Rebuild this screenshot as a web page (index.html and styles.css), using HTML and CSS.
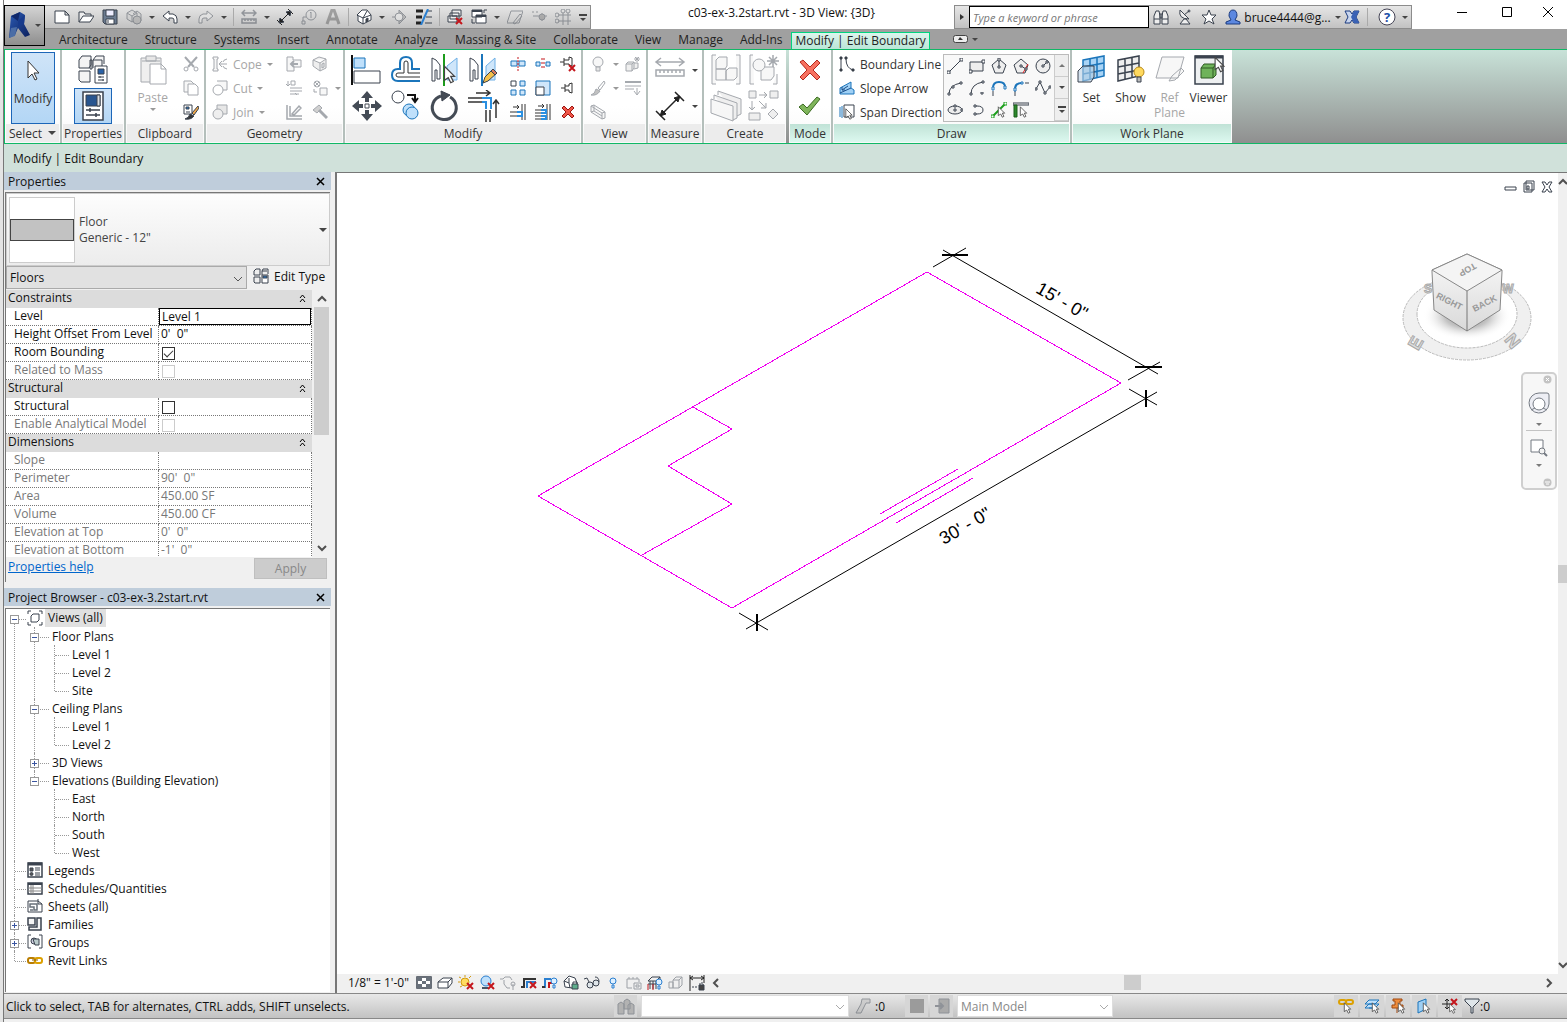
FILE: index.html
```html
<!DOCTYPE html>
<html lang="en">
<head>
    <meta charset="UTF-8">
    <meta name="viewport" content="width=device-width, initial-scale=1.0">
    <title>c03-ex-3.2start.rvt - 3D View: {3D}</title>
    <link rel="stylesheet" href="styles.css">
</head>
<body>
<!-- shared shapes -->
<svg class="defs" width="0" height="0">
    <defs>
        <linearGradient id="navy" x1="0" y1="0" x2="1" y2="1"><stop offset="0" stop-color="#2b5bb5"/><stop offset="1" stop-color="#0c1f5c"/></linearGradient>
        <linearGradient id="ring" x1="0" y1="0" x2="0" y2="1"><stop offset="0" stop-color="#fafafa"/><stop offset="1" stop-color="#d9d9d9"/></linearGradient>
        <radialGradient id="shade"><stop offset="0" stop-color="#777"/><stop offset=".5" stop-color="#aaa" stop-opacity=".7"/><stop offset="1" stop-color="#fff" stop-opacity="0"/></radialGradient>
        <symbol id="cursor" viewBox="0 0 10 15"><path d="M1 1v11l3-2 2 4 2-1-2-4h3z" fill="#fff" stroke="#444"/></symbol>
        <symbol id="redx" viewBox="0 0 8 8"><path d="M1 1l6 6M7 1L1 7" stroke="#c4161c" stroke-width="2"/></symbol>
        <symbol id="bulb" viewBox="0 0 8 12"><circle cx="4" cy="4" r="3" fill="#dff0ff" stroke="#2a7fd0"/><path d="M3 8h2v3H3z" fill="#dff0ff" stroke="#2a7fd0"/></symbol>
    </defs>
</svg>

<div class="window">
    <button class="app-button" aria-label="Application menu">
        <svg width="24" height="28" viewBox="0 0 24 28"><path d="M3 4l9-4 5 3-1 9 6 11-5 2-7-9-3 7-6 3z" fill="url(#navy)"/><path d="M3 4l9-4-2 9z" fill="#10286b"/><path d="M10 9l7-6-1 9-6 3z" fill="#173a8c"/><path d="M1 26l2-10 6-1-2 9z" fill="#4b6da6"/></svg>
        <i class="tri"></i>
    </button>

    <header class="titlebar">
        <div class="qat">
            <button aria-label="New"><svg class="ico" width="16" height="16"><path d="M1 2h10l4 4v8H1zM11 2v4h4" fill="#fff"/></svg></button>
            <button aria-label="Open"><svg class="ico" width="16" height="16"><path d="M1 13V3h5l1 2h6v2" fill="#eee"/><path d="M1 13l4-6h11l-4 6z" fill="#fff"/></svg></button>
            <button aria-label="Save"><svg class="ico" width="16" height="16"><path d="M1 1h14v14H3l-2-2z" fill="#6b7b90"/><path d="M4 1h8v6H4z" fill="#eef"/><path d="M4 10h8v5H4z" fill="#fff"/><path d="M6 11v3"/></svg></button>
            <button aria-label="Synchronize"><svg class="ico dis" width="16" height="16"><path d="M1 4l5-3 5 3v6l-5 3-5-3zM1 4l5 3 5-3M6 7v6M7 5l4-3 4 3v7l-4 3-3-2" fill="#ccc"/><circle cx="11" cy="11" r="4" fill="#999"/></svg></button>
            <button class="drop" aria-label="Synchronize menu"><i class="tri"></i></button>
            <button aria-label="Undo"><svg class="ico" width="16" height="16"><path d="M1 7l6-5v3h4q4 1 4 5v4h-3v-3q0-2-2-2H7v3z" fill="#fff"/></svg></button>
            <button class="drop" aria-label="Undo menu"><i class="tri"></i></button>
            <button aria-label="Redo"><svg class="ico dis" width="16" height="16"><path d="M15 7L9 2v3H5q-4 1-4 5v4h3v-3q0-2 2-2h3v3z" fill="#eee"/></svg></button>
            <button class="drop" aria-label="Redo menu"><i class="tri"></i></button>
            <i class="sep"></i>
            <button aria-label="Measure"><svg class="ico dis" width="16" height="16"><path d="M1 4h14M4 1L1 4l3 3M12 1l3 3-3 3M1 10h14v4H1zM4 10v2M7 10v2M10 10v2M13 10v2" stroke-width="1.5"/></svg></button>
            <button class="drop" aria-label="Measure menu"><i class="tri"></i></button>
            <button aria-label="Aligned dimension"><svg class="ico" width="16" height="16"><path d="M2 14L14 2M0 11l5 5M11 0l5 5" stroke="#222"/><path d="M2 14l1-5 4 4zM14 2l-1 5-4-4z" fill="#222"/></svg></button>
            <button aria-label="Tag"><svg class="ico dis" width="16" height="16"><circle cx="10" cy="6" r="5"/><path d="M9 4l1-1v6M5 8H2v4M1 12h3v3H1z"/></svg></button>
            <button aria-label="Text"><svg class="ico dis" width="16" height="16"><path d="M2 15L7 1h2l5 14M4 10h8" stroke-width="3" stroke="#555"/></svg></button>
            <i class="sep"></i>
            <button aria-label="Default 3D view"><svg class="ico" width="16" height="16"><path d="M1 6l5-5h5l4 5v5l-8 4-5-3V7z" fill="#fff"/><path d="M1 6l6 3 4-7M7 9v6M7 9l8-3"/><path d="M10 10l2-1v3l-2 1z" fill="#444"/></svg></button>
            <button class="drop" aria-label="3D view menu"><i class="tri"></i></button>
            <button aria-label="Section"><svg class="ico dis" width="16" height="16"><path d="M0 8h3M7 1l7 7-7 7z" fill="#999"/><circle cx="7" cy="8" r="4" fill="#eee"/></svg></button>
            <button aria-label="Thin lines"><svg class="ico" width="16" height="16"><path d="M0 2h7M0 8h6M0 14h5" stroke-width="3" stroke="#222"/><path d="M11 2h5M10 8h6M9 14h7"/><path d="M12 0L5 16" stroke="#2a7fd0" stroke-width="2"/></svg></button>
            <i class="sep"></i>
            <button aria-label="Close hidden windows"><svg class="ico" width="16" height="16"><path d="M5 1h9v6H5zM3 4h9v6H3zM1 7h9v6H1z" fill="#eee"/><use href="#redx" x="8" y="8" width="8" height="8"/></svg></button>
            <button aria-label="Switch windows"><svg class="ico" width="16" height="16"><path d="M1 1h10v7H1zM5 6h10v8H5z" fill="#fff"/><path d="M1 2h10M5 7h10" stroke-width="2"/><path d="M1 10v4h3M13 4V1h3"/></svg></button>
            <button class="drop" aria-label="Switch windows menu"><i class="tri"></i></button>
            <button aria-label="Sketch"><svg class="ico dis" width="16" height="16"><path d="M4 2h12L12 14H0zM6 14l7-9 2 2-7 8z"/></svg></button>
            <button aria-label="Spot elevation"><svg class="ico dis" width="16" height="16"><path d="M1 3h2M5 3h2M2 7h14M11 4v8"/><circle cx="11" cy="8" r="3" fill="#777"/></svg></button>
            <button aria-label="Grid"><svg class="ico dis" width="16" height="16"><path d="M3 6h13M3 12h13M8 4v12M13 4v12"/><circle cx="8" cy="2" r="2"/><circle cx="13" cy="2" r="2"/><circle cx="2" cy="6" r="2"/><circle cx="2" cy="12" r="2"/></svg></button>
            <button class="more" aria-label="Customize toolbar"><i class="bar"></i><i class="tri"></i></button>
        </div>
        <h1>c03-ex-3.2start.rvt - 3D View: {3D}</h1>
        <div class="infocenter">
            <button class="go" aria-label="Collapse search"><svg width="6" height="8"><path d="M1 1l4 3-4 3z" fill="#333"/></svg></button>
            <input type="text" placeholder="Type a keyword or phrase" aria-label="Search">
            <button aria-label="Find"><svg class="ico" width="16" height="16"><path d="M1 15V7l2-5h3l1 5v8zM15 15V7l-2-5h-3L9 7v8zM1 10h6M9 10h6M7 5h2v4H7z" fill="#eee"/></svg></button>
            <button aria-label="Communication center"><svg class="ico" width="16" height="16"><path d="M3 1q-2 9 9 9zM7 6l5-4M3 15h10l-4-5H7z" fill="#eee"/><circle cx="12" cy="2" r="1"/></svg></button>
            <button aria-label="Favorites"><svg class="ico" width="16" height="16"><path d="M8 1l2 5h5l-4 4 2 5-5-3-5 3 2-5-4-4h5z" fill="#fff"/></svg></button>
            <button aria-label="Account"><svg class="ico" width="16" height="16"><path d="M1 15v-2l5-2-2-4q0-6 4-6t4 6l-2 4 5 2v2z" fill="#5b87e0" stroke="#1b3b80"/></svg></button>
            <button class="user">bruce4444@g... <i class="tri"></i></button>
            <button aria-label="Exchange apps"><svg width="16" height="16"><path d="M1 2h5l2 3 2-3h5l-3 6 3 6h-5l-2-3-2 3H1l3-6z" fill="#c9d6ee" stroke="#1b3b80"/><path d="M10 2h5l-3 6 3 6h-5L7 8z" fill="#3a62b5"/></svg></button>
            <i class="sep"></i>
            <button class="help" aria-label="Help"><svg width="18" height="18"><circle cx="9" cy="9" r="8" fill="#fff" stroke="#445"/><text x="9" y="14" text-anchor="middle" class="help-mark">?</text></svg></button>
            <button class="drop" aria-label="Help menu"><i class="tri"></i></button>
        </div>
        <div class="win-controls">
            <button aria-label="Minimize"><svg width="11" height="11"><path d="M0 5h10v1H0z"/></svg></button>
            <button aria-label="Maximize"><svg width="11" height="11"><path d="M.5.5h9v9h-9z" fill="none" stroke="#000"/></svg></button>
            <button aria-label="Close"><svg width="11" height="11"><path d="M0 0l10 10M10 0L0 10" stroke="#000"/></svg></button>
        </div>
    </header>

    <nav class="tabs">
        <a href="#">Architecture</a>
        <a href="#">Structure</a>
        <a href="#">Systems</a>
        <a href="#">Insert</a>
        <a href="#">Annotate</a>
        <a href="#">Analyze</a>
        <a href="#">Massing &amp; Site</a>
        <a href="#">Collaborate</a>
        <a href="#">View</a>
        <a href="#">Manage</a>
        <a href="#">Add-Ins</a>
        <a href="#" class="active">Modify | Edit Boundary</a>
        <button class="collapse" aria-label="Minimize ribbon"><svg width="15" height="8"><rect x=".5" y=".5" width="14" height="7" rx="2" fill="#eee" stroke="#444"/><path d="M5 5l2-3 3 3z" fill="#333"/></svg><i class="tri"></i></button>
    </nav>

    <section class="ribbon">
        <div class="panel p-select">
            <div class="tools">
                <button class="big pressed"><svg width="20" height="32" viewBox="0 0 20 32"><path d="M5 6v17l4-4 3 6 2-1-3-6h5z" fill="#fff" stroke="#333"/></svg>Modify</button>
            </div>
            <button class="caption">Select <i class="tri"></i></button>
        </div>
        <div class="panel p-props">
            <div class="tools stack">
                <button aria-label="Type properties"><svg class="ico" width="32" height="32"><path d="M2 6l3-4h9v9l-2 3H2zM16 6l3-4h8v8M2 17h11v11H4l-2-2zM16 14V6h9v6M13 6h2v9h-2z" fill="#f4f4f4"/><path d="M18 12h12v17H18z" fill="#fff"/><path d="M21 15h6v5h-6z" fill="#2a62a8"/><path d="M21 23h6M21 26h6M23 22v2M26 25v2"/></svg></button>
                <button class="pressed" aria-label="Properties"><svg class="ico" width="32" height="32"><path d="M6 2h20v28H6z" fill="#fff" stroke-width="1.5"/><path d="M9 5h14v11H9z" fill="#28558f"/><path d="M20 5h3v11h-3z" fill="#d8dde2"/><path d="M9 20h14M9 25h14M13 18v4M19 23v4" stroke-width="1.5"/></svg></button>
            </div>
            <div class="caption">Properties</div>
        </div>
        <div class="panel p-clip">
            <div class="tools">
                <button class="big" disabled><svg class="ico" width="32" height="32" viewBox="0 0 32 32"><path d="M4 4h20v24H4z" fill="#ddd"/><path d="M9 2h10v5H9z" fill="#ccc"/><path d="M13 10h11l5 5v15H13z" fill="#fff"/><path d="M24 10v5h5M5 7h18"/></svg>Paste<i class="tri"></i></button>
                <div class="col">
                    <button disabled aria-label="Cut"><svg class="ico" width="16" height="16"><path d="M2 1l9 10M14 1L5 11" stroke-width="2"/><circle cx="3" cy="13" r="2"/><circle cx="13" cy="13" r="2"/></svg></button>
                    <button disabled aria-label="Copy"><svg class="ico" width="16" height="16"><path d="M1 1h7l3 3v8H1z" fill="#eee"/><path d="M5 4h7l3 3v8H5z" fill="#fff"/></svg></button>
                    <button aria-label="Match type"><svg class="ico" width="16" height="16"><path d="M1 1h8v9H1z" fill="#fff"/><path d="M3 3h3v2H3z" fill="#2a7fd0"/><path d="M3 8h4"/><path d="M9 9l6-7 1 2-5 7z" fill="#eda64a"/><path d="M2 15q4-1 5-5l4 2q-3 4-9 3z" fill="#333"/></svg></button>
                </div>
            </div>
            <div class="caption">Clipboard</div>
        </div>
        <div class="panel p-geo">
            <div class="tools">
                <div class="col labelled">
                    <button disabled><svg class="ico" width="16" height="16"><path d="M1 1h5v2H5v10h1v2H1v-2h1V3H1zM7 8h8M10 5L7 8l3 3M15 3q-4 1-4 3M15 13q-4-1-4-3" fill="#eee"/></svg>Cope <i class="tri"></i></button>
                    <button disabled><svg class="ico" width="16" height="16"><path d="M5 1h10v9h-4" fill="#eee"/><circle cx="6" cy="10" r="5" fill="#fff"/></svg>Cut <i class="tri"></i></button>
                    <button disabled><svg class="ico" width="16" height="16"><path d="M5 1h10v9H5z" fill="#ccc"/><circle cx="6" cy="10" r="5" fill="#ddd"/></svg>Join <i class="tri"></i></button>
                </div>
                <div class="col">
                    <button disabled aria-label="Wall joins"><svg class="ico" width="16" height="16"><path d="M1 1h6v3h8v7H8v4H1z" fill="#eee"/><path d="M12 8H5M8 5L5 8l3 3" stroke-width="2"/></svg></button>
                    <button disabled aria-label="Beam joins"><svg class="ico" width="16" height="16"><path d="M2 1v5M0 4l2 2 2-2M5 1h4v4H5zM4 8h12M4 11h12M4 14h9M9 13l2 2"/></svg></button>
                    <button disabled aria-label="Uncut"><svg class="ico" width="16" height="16"><path d="M1 1v14h15M4 2v10h12M6 10l7-8 2 2-7 7z" stroke-width="1.5"/></svg></button>
                </div>
                <div class="col">
                    <button disabled aria-label="Split face"><svg class="ico" width="16" height="16"><path d="M1 4l6-3 7 2v9l-6 3-7-5zM1 4l7 3 6-4M8 7v8M10 8l2-1v4l-2 1z" fill="#ddd"/></svg></button>
                    <button disabled aria-label="Paint"><svg class="ico" width="16" height="16"><circle cx="5" cy="4" r="3"/><path d="M3 2l4 4M7 2L3 6M2 9v3h3M8 8h7v7H8z" fill="#eee"/></svg></button>
                    <button disabled aria-label="Demolish"><svg class="ico" width="16" height="16"><path d="M1 6l6-5 3 3-5 5z" fill="#999"/><path d="M7 6l8 8" stroke-width="3"/></svg></button>
                </div>
                <div class="col narrow"><span></span><button disabled aria-label="Paint menu"><i class="tri"></i></button></div>
            </div>
            <div class="caption">Geometry</div>
        </div>
        <div class="panel p-modify">
            <div class="tools">
                <div class="large-grid">
                    <button aria-label="Align"><svg class="ico" width="32" height="32"><path d="M1 1v30" stroke="#111" stroke-width="2"/><path d="M3 4h11v10H3z" fill="#bfe0fb" stroke="#1b75bb"/><path d="M3 17h26v12H3z" fill="#fff"/></svg></button>
                    <button aria-label="Offset"><svg class="ico" width="32" height="32"><path d="M30 27H8q-6 0-6-6t6-6h2V9q0-6 6-6t6 6v6h8" stroke="#1b75bb" stroke-width="2"/><path d="M30 23H8q-2 0-2-2t2-2h6V9q0-2 2-2t2 2v10h12" stroke="#333"/></svg></button>
                    <button aria-label="Mirror pick axis"><svg class="ico" width="32" height="32"><path d="M3 4l4 2 4 5v14H8v-9H6v11H3z" fill="#fff"/><path d="M28 4l-10 8v14h10z" fill="#cfe6fa" stroke="#6fb0e6"/><path d="M15 0v32" stroke="#1c9c1c" stroke-width="2"/><use href="#cursor" x="14" y="11" width="13" height="19"/></svg></button>
                    <button aria-label="Mirror draw axis"><svg class="ico" width="32" height="32"><path d="M2 4l4 2 4 5v14H7v-9H5v11H2z" fill="#fff"/><path d="M27 4l-9 8v14h9z" fill="#cfe6fa" stroke="#6fb0e6"/><path d="M14 0v32" stroke="#1b75bb" stroke-width="2"/><path d="M15 29l2-6 8-8 4 4-9 8z" fill="#f5c04a"/><path d="M23 17l2-2 4 4-2 2z" fill="#d97a5a"/></svg></button>
                    <button aria-label="Move"><svg width="32" height="32" fill="#444b55"><path d="M16 1l6 7h-4v4h-4V8h-4zM16 31l6-7h-4v-4h-4v4h-4zM1 16l7-6v4h4v4H8v4zM31 16l-7-6v4h-4v4h4v4z"/><path d="M14 14h4v4h-4z" fill="#fff" stroke="#444b55"/></svg></button>
                    <button aria-label="Copy"><svg class="ico" width="32" height="32"><circle cx="8" cy="7" r="6" fill="#fff"/><path d="M17 5h8v6M22 8l3 4 3-4" stroke="#111" stroke-width="2"/><circle cx="19" cy="20" r="6" fill="#bfe0fb" stroke="#1b75bb"/><circle cx="22" cy="23" r="6" fill="#bfe0fb" stroke="#1b75bb"/></svg></button>
                    <button aria-label="Rotate"><svg class="ico" width="32" height="32"><path d="M21 7a12 12 0 1 1-9-1" stroke-width="3" stroke="#444b55"/><path d="M12 1l9 4-8 6z" fill="#444b55"/></svg></button>
                    <button aria-label="Trim extend to corner"><svg class="ico" width="32" height="32"><path d="M8 3h14M18 0l4 3-4 3M0 8h14M0 12h14M22 20v12M18 20v12M28 28V10M25 14l3-4 3 4" stroke="#333" stroke-width="1.5"/><path d="M14 8h9v11M14 12h4v7" stroke="#2a8fe0" stroke-width="2"/></svg></button>
                </div>
                <div class="small-grid">
                    <button aria-label="Split element"><svg class="ico" width="16" height="16"><path d="M1 5h6v5H1zM9 5h6v5H9z" fill="#cfe6fa" stroke="#1b75bb"/><path d="M8 1v14" stroke="#c4161c" stroke-dasharray="2 1"/></svg></button>
                    <button aria-label="Split with gap"><svg class="ico" width="16" height="16"><path d="M1 6h4v4H1zM11 6h4v4h-4z" fill="#cfe6fa" stroke="#1b75bb"/><path d="M7 2v12M9 2v12" stroke="#c4161c" stroke-dasharray="2 2"/></svg></button>
                    <button aria-label="Unpin"><svg class="ico" width="16" height="16"><path d="M0 6h4M4 2v8M4 4h5V1l3 1v8l-3-1V8H4" stroke="#333"/><use href="#redx" x="8" y="8" width="8" height="8"/></svg></button>
                    <button aria-label="Array"><svg class="ico" width="16" height="16"><path d="M1 1h5v5H1z"/><path d="M10 1h5v5h-5zM1 10h5v5H1zM10 10h5v5h-5z" fill="#cfe6fa" stroke="#1b75bb"/></svg></button>
                    <button aria-label="Scale"><svg class="ico" width="16" height="16"><path d="M1 1h14v14H1z" fill="#cfe6fa" stroke="#1b75bb"/><path d="M1 7h8v8H1z" fill="#fff"/></svg></button>
                    <button aria-label="Pin"><svg class="ico" width="16" height="16"><path d="M1 8h4M5 4v8M5 6h4V4l3-1v10l-3-1v-2H5" stroke="#333"/></svg></button>
                    <button aria-label="Trim single"><svg class="ico" width="16" height="16"><path d="M3 3h6M7 1l2 2-2 2M0 8h7M0 12h7M12 0v16M15 0v16" stroke="#333"/><path d="M7 8h5v4H7" stroke="#2a8fe0" stroke-width="2"/></svg></button>
                    <button aria-label="Trim multiple"><svg class="ico" width="16" height="16"><path d="M3 2h6M7 0l2 2-2 2M0 6h6M0 9h6M0 12h6M0 15h6M12 0v16M15 0v16" stroke="#333"/><path d="M6 6h5v3H6M6 12h5v3H6" stroke="#2a8fe0" stroke-width="2"/></svg></button>
                    <button aria-label="Delete"><svg width="16" height="16"><path d="M2 4l2-2 4 4 4-4 2 2-4 4 4 4-2 2-4-4-4 4-2-2 4-4z" fill="#ef5548" stroke="#9a1510"/></svg></button>
                </div>
            </div>
            <div class="caption">Modify</div>
        </div>
        <div class="panel p-view">
            <div class="tools">
                <div class="col">
                    <button disabled aria-label="Hide in view"><svg class="ico" width="16" height="16"><circle cx="8" cy="6" r="5" fill="#eee"/><path d="M6 11h4v4H6z" fill="#ccc"/></svg></button>
                    <button disabled aria-label="Override graphics"><svg class="ico" width="16" height="16"><path d="M8 8l6-7 1 2-5 7z"/><path d="M1 15q4-1 5-6l4 2q-3 5-9 4z" fill="#777"/></svg></button>
                    <button disabled aria-label="Selection box"><svg class="ico" width="16" height="16"><path d="M1 2l3-1 11 7v6l-3 1L1 8zM1 2l11 7 3-1M12 9v6M4 1v6l-3 1M4 7l8 5" fill="#eee"/></svg></button>
                </div>
                <div class="col narrow">
                    <button disabled aria-label="Hide menu"><i class="tri"></i></button>
                    <button disabled aria-label="Override menu"><i class="tri"></i></button>
                </div>
                <div class="col">
                    <button disabled aria-label="Displace"><svg class="ico" width="16" height="16"><path d="M1 8l2-2h6v6l-2 3H1zM1 8h6v7M7 8l2-2M9 7h4v5l-4 1" fill="#ddd"/><path d="M12 1v5M9 3h6M10 1l4 4M14 1l-4 4"/></svg></button>
                    <button disabled aria-label="Linework"><svg class="ico" width="16" height="16"><path d="M0 2h16" stroke-width="2"/><path d="M0 6h16M0 9h9M12 8v6M9 11l3 4 3-4"/></svg></button>
                </div>
            </div>
            <div class="caption">View</div>
        </div>
        <div class="panel p-measure">
            <div class="tools">
                <div class="stack">
                    <button disabled aria-label="Measure"><svg class="ico" width="32" height="32"><path d="M2 8h28M7 4L2 8l5 4M25 4l5 4-5 4M2 16h28v6H2zM6 16v3M10 16v3M14 16v3M18 16v3M22 16v3M26 16v3" stroke-width="1.5"/></svg></button>
                    <button aria-label="Dimension"><svg width="32" height="32" stroke="#222" fill="#222"><path d="M6 26L26 6M2 21l9 9M21 2l9 9" stroke-width="1.5"/><path d="M6 26l2-6 4 4zM26 6l-2 6-4-4z"/></svg></button>
                </div>
                <div class="stack narrow">
                    <button aria-label="Measure menu"><i class="tri"></i></button>
                    <button aria-label="Dimension menu"><i class="tri"></i></button>
                </div>
            </div>
            <div class="caption">Measure</div>
        </div>
        <div class="panel p-create">
            <div class="tools">
                <div class="large-grid">
                    <button disabled aria-label="Create assembly"><svg class="ico" width="32" height="32"><path d="M6 1H2v29h4M26 1h4v29h-4M6 6l3-3h8v9l-2 3H6zM6 15h10v11H6zM16 17l3-3h8v9l-3 3h-8z" fill="#eee"/></svg></button>
                    <button disabled aria-label="Create group"><svg class="ico" width="32" height="32"><path d="M5 1H2v29h4M29 20v10h-4M13 16l3-3h10v9l-3 4H13z" fill="#eee"/><circle cx="11" cy="11" r="6" fill="#eee"/><path d="M25 1v12M19 7h12M21 3l8 8M29 3l-8 8" stroke-width="1.5"/></svg></button>
                    <button disabled aria-label="Create parts"><svg class="ico" width="32" height="32"><path d="M8 1l23 8v15l-4 2M8 1v4" fill="#ddd"/><path d="M4 5l23 8v15l-4 2M4 5v4" fill="#ddd"/><path d="M1 9l22 7v15L1 23z" fill="#eee"/></svg></button>
                    <button disabled aria-label="Create similar"><svg class="ico" width="32" height="32"><path d="M1 1h7v7H1zM22 1h8v7h-8zM1 23h11v7H1zM20 24l5-5 5 5-5 5zM11 5h8M16 2l3 3-3 3M4 11v9M1 17l3 3 3-3M11 11l7 7M18 13v5h-5" fill="#ddd"/></svg></button>
                </div>
            </div>
            <div class="caption">Create</div>
        </div>
        <div class="panel context p-mode">
            <div class="tools stack">
                <button aria-label="Cancel edit mode"><svg width="24" height="24"><path d="M2 4l3-2 7 7 7-7 3 3-7 7 7 7-3 3-7-7-7 7-3-3 7-7z" fill="#f8705f" stroke="#b3281c"/></svg></button>
                <button aria-label="Finish edit mode"><svg width="24" height="24"><path d="M1 13l4-3 4 4 10-11 3 2L9 21z" fill="#7fb55b" stroke="#3c6b22"/></svg></button>
            </div>
            <div class="caption">Mode</div>
        </div>
        <div class="panel context p-draw">
            <div class="tools">
                <div class="col labelled">
                    <button><svg class="ico" width="16" height="16"><path d="M2 3v11M7 3q0 9 7 11"/><path d="M1 1h2v2H1zM1 13h2v2H1zM6 1h2v2H6zM13 13h2v2h-2z" fill="#333"/></svg>Boundary Line</button>
                    <button><svg class="ico" width="16" height="16"><path d="M1 8l11-6v6l3 2v4H1z" fill="#9fd0f5" stroke="#1b75bb"/><path d="M1 13l11-5M3 10l6-4M3 7v3h3" stroke="#1a4f8a"/></svg>Slope Arrow</button>
                    <button><svg class="ico" width="16" height="16"><path d="M1 3v10M3 2v12" stroke="#1b75bb"/><path d="M5 1h10v12H5z"/><use href="#cursor" x="5" y="4" width="10" height="12"/></svg>Span Direction</button>
                </div>
                <div class="gallery">
                    <div class="shapes">
                        <button aria-label="Line"><svg class="ico" width="16" height="16"><path d="M3 13L13 3"/><path d="M0 13h3v3H0zM13 0h3v3h-3z" fill="#fff"/></svg></button>
                        <button aria-label="Rectangle"><svg class="ico" width="16" height="16"><path d="M1 4h13v9H1z" fill="#eee"/><path d="M13 2h3v3h-3zM0 12h3v3H0z" fill="#fff"/></svg></button>
                        <button aria-label="Inscribed polygon"><svg class="ico" width="16" height="16"><path d="M8 1l7 6-3 8H4L1 7zM8 3v6" fill="#eee"/><path d="M7 0h2v3H7zM7 8h2v2H7z" fill="#fff"/></svg></button>
                        <button aria-label="Circumscribed polygon"><svg class="ico" width="16" height="16"><path d="M8 1l7 6-3 8H4L1 7zM8 8l5 3" fill="#eee"/><path d="M10 15l5-9" stroke="#d22"/><path d="M7 7h2v2H7zM12 10h2v2h-2z" fill="#fff"/></svg></button>
                        <button aria-label="Circle"><svg class="ico" width="16" height="16"><circle cx="8" cy="8" r="7" fill="#eee"/><path d="M8 8l4-4"/><path d="M7 7h2v2H7zM11 3h2v2h-2z" fill="#fff"/></svg></button>
                        <button aria-label="Start-end arc"><svg class="ico" width="16" height="16"><path d="M2 14q0-9 12-11"/><path d="M1 13h2v2H1zM5 6h2v2H5zM13 2h2v2h-2z" fill="#fff"/></svg></button>
                        <button aria-label="Center-ends arc"><svg class="ico" width="16" height="16"><path d="M2 14q0-10 12-12M13 12v3M11 13h4"/><path d="M1 13h2v2H1zM13 1h2v2h-2z" fill="#fff"/></svg></button>
                        <button aria-label="Tangent arc"><svg class="ico" width="16" height="16"><path d="M2 8q0-6 6-6t6 5" stroke="#1b75bb" stroke-width="2"/><path d="M2 11v5"/><path d="M1 7h2v3H1zM13 6h2v3h-2z" fill="#fff" stroke="#1b75bb"/></svg></button>
                        <button aria-label="Fillet arc"><svg class="ico" width="16" height="16"><path d="M2 9q0-6 7-6" stroke="#1b75bb" stroke-width="2"/><path d="M2 11v5M12 3h4"/><path d="M1 8h2v3H1zM8 2h2v2H8z" fill="#fff" stroke="#1b75bb"/></svg></button>
                        <button aria-label="Spline"><svg class="ico" width="16" height="16"><path d="M1 9l4-7 5 11 5-6"/><path d="M0 8h2v2H0zM4 1h2v2H4zM9 12h2v2H9zM14 6h2v2h-2z" fill="#fff"/></svg></button>
                        <button aria-label="Ellipse"><svg class="ico" width="16" height="16"><ellipse cx="8" cy="8" rx="7" ry="4" fill="#eee"/><path d="M7 3h2v2H7zM7 7h2v2H7zM14 7h2v2h-2z" fill="#fff"/></svg></button>
                        <button aria-label="Partial ellipse"><svg class="ico" width="16" height="16"><path d="M6 4h2q6 0 6 4t-6 4H6"/><path d="M5 3h2v2H5zM5 11h2v2H5z" fill="#fff"/></svg></button>
                        <button aria-label="Pick lines"><svg class="ico" width="16" height="16"><path d="M1 15L15 1" stroke="#1ca01c" stroke-width="2"/><path d="M0 13h3v3H0zM13 0h3v3h-3z" fill="#fff" stroke="#1ca01c"/><use href="#cursor" x="6" y="4" width="9" height="12"/></svg></button>
                        <button aria-label="Pick walls"><svg class="ico" width="16" height="16"><path d="M0 1h16v2H0z"/><path d="M1 3h3v12H1z" fill="#2d8a2d" stroke="#1b5e1b"/><use href="#cursor" x="6" y="4" width="9" height="12"/></svg></button>
                    </div>
                    <div class="gallery-scroll">
                        <button aria-label="Scroll up"><i class="tri up"></i></button>
                        <button aria-label="Scroll down"><i class="tri"></i></button>
                        <button aria-label="More shapes"><i class="bar"></i><i class="tri"></i></button>
                    </div>
                </div>
            </div>
            <div class="caption">Draw</div>
        </div>
        <div class="panel context p-plane">
            <div class="tools">
                <button class="big"><svg class="ico" width="32" height="32" viewBox="0 0 32 32"><path d="M7 6l21-4v20L7 27z" fill="#a9d4f6" stroke="#1b75bb" stroke-width="1.5"/><path d="M14 5v20M21 4v20M7 13l21-4M7 20l21-4" stroke="#1b75bb" stroke-width="1.5"/><path d="M2 17l5-5h11v11l-3 5H2z" fill="#b8cfe2" fill-opacity=".6"/></svg>Set</button>
                <button class="big"><svg class="ico" width="32" height="32" viewBox="0 0 32 32"><path d="M3 6l21-4v20L3 27zM10 5v20M17 4v20M3 13l21-4M3 20l21-4" fill="#eee" stroke-width="1.5"/><circle cx="24" cy="18" r="5" fill="#ffd95e" stroke="#b88a1a"/><path d="M22 23h4v5h-4z" fill="#bbb"/></svg>Show</button>
                <button class="big" disabled><svg class="ico" width="32" height="32" viewBox="0 0 32 32"><path d="M8 3h22l-6 21H2zM15 27l3-5 9-8 3 3-9 9z" fill="#eee"/></svg>Ref<br>Plane</button>
                <button class="big"><svg class="ico" width="32" height="32" viewBox="0 0 32 32"><path d="M2 2h28v28H2z" fill="#eef0f1" stroke-width="1.5"/><path d="M2 3h28" stroke-width="3"/><path d="M8 14l3-4h12v11l-3 3H8z" fill="#6fb35a" stroke="#2e5a22"/><path d="M8 14h12v10M20 14l3-4" stroke="#2e5a22"/><use href="#cursor" x="21" y="2" width="11" height="17"/></svg>Viewer</button>
            </div>
            <div class="caption">Work Plane</div>
        </div>
    </section>

    <div class="options-bar">Modify | Edit Boundary</div>

    <main class="workspace">
        <aside class="docks">
            <section class="palette">
                <header><h2>Properties</h2><button aria-label="Close properties"><svg width="9" height="9"><path d="M1 1l7 7M8 1L1 8" stroke="#000" stroke-width="1.5"/></svg></button></header>
                <div class="palette-body">
                    <button class="type-selector">
                        <span class="thumb"><i></i></span>
                        <span class="type-name">Floor<br>Generic - 12"</span>
                        <i class="tri"></i>
                    </button>
                    <div class="filter-row">
                        <label class="combo filter">
                            <select aria-label="Category"><option>Floors</option></select>
                            <svg width="10" height="6"><path d="M1 1l4 4 4-4"/></svg>
                        </label>
                        <button class="edit-type"><svg class="ico" width="16" height="16"><path d="M1 3l2-2h4v6H1zM9 3l1-2h5v5M1 9h6v6H2l-1-1zM9 7V3h5" fill="#eee"/><path d="M9 7h6v8H9z" fill="#fff"/><path d="M10 8h4v2h-4z" fill="#2a7fd0"/></svg>Edit Type</button>
                    </div>
                    <div class="grid-scroll">
                        <div class="grid-clip">
                            <table>
                                <tr class="group"><th colspan="2" scope="colgroup">Constraints <svg width="7" height="8"><path d="M1 4l2.5-3L6 4M1 8l2.5-3L6 8"/></svg></th></tr>
                                <tr><th scope="row">Level</th><td class="editing"><input type="text" value="Level 1" aria-label="Level"></td></tr>
                                <tr><th scope="row">Height Offset From Level</th><td>0'&nbsp; 0"</td></tr>
                                <tr><th scope="row"><label for="bounding">Room Bounding</label></th><td><input type="checkbox" id="bounding" checked></td></tr>
                                <tr class="ro"><th scope="row"><label for="mass">Related to Mass</label></th><td><input type="checkbox" id="mass" disabled></td></tr>
                                <tr class="group"><th colspan="2" scope="colgroup">Structural <svg width="7" height="8"><path d="M1 4l2.5-3L6 4M1 8l2.5-3L6 8"/></svg></th></tr>
                                <tr><th scope="row"><label for="structural">Structural</label></th><td><input type="checkbox" id="structural"></td></tr>
                                <tr class="ro"><th scope="row"><label for="analytical">Enable Analytical Model</label></th><td><input type="checkbox" id="analytical" disabled></td></tr>
                                <tr class="group"><th colspan="2" scope="colgroup">Dimensions <svg width="7" height="8"><path d="M1 4l2.5-3L6 4M1 8l2.5-3L6 8"/></svg></th></tr>
                                <tr class="ro"><th scope="row">Slope</th><td></td></tr>
                                <tr class="ro"><th scope="row">Perimeter</th><td>90'&nbsp; 0"</td></tr>
                                <tr class="ro"><th scope="row">Area</th><td>450.00 SF</td></tr>
                                <tr class="ro"><th scope="row">Volume</th><td>450.00 CF</td></tr>
                                <tr class="ro"><th scope="row">Elevation at Top</th><td>0'&nbsp; 0"</td></tr>
                                <tr class="ro"><th scope="row">Elevation at Bottom</th><td>-1'&nbsp; 0"</td></tr>
                            </table>
                        </div>
                        <div class="vscroll">
                            <svg class="chev" width="10" height="8"><path d="M1 6l4-4 4 4"/></svg>
                            <i class="thumb-bar"></i>
                            <svg class="chev" width="10" height="8"><path d="M1 2l4 4 4-4"/></svg>
                        </div>
                    </div>
                    <div class="palette-foot"><a href="#">Properties help</a><button disabled>Apply</button></div>
                </div>
            </section>

            <section class="palette browser">
                <header><h2>Project Browser - c03-ex-3.2start.rvt</h2><button aria-label="Close browser"><svg width="9" height="9"><path d="M1 1l7 7M8 1L1 8" stroke="#000" stroke-width="1.5"/></svg></button></header>
                <div class="palette-body tree-box">
                    <ul class="tree">
                        <li><button class="toggle open" aria-label="Collapse"></button>
                            <div class="node"><svg class="ico" width="16" height="16"><path d="M4 1H1v3M12 1h3v3M4 15H1v-3M12 15h3v-3M4 6l2-2h6v6l-2 2H4z"/></svg><span class="selected">Views (all)</span></div>
                            <ul>
                                <li><button class="toggle open" aria-label="Collapse"></button><div class="node">Floor Plans</div>
                                    <ul>
                                        <li><div class="node">Level 1</div></li>
                                        <li><div class="node">Level 2</div></li>
                                        <li><div class="node">Site</div></li>
                                    </ul>
                                </li>
                                <li><button class="toggle open" aria-label="Collapse"></button><div class="node">Ceiling Plans</div>
                                    <ul>
                                        <li><div class="node">Level 1</div></li>
                                        <li><div class="node">Level 2</div></li>
                                    </ul>
                                </li>
                                <li><button class="toggle" aria-label="Expand"></button><div class="node">3D Views</div></li>
                                <li><button class="toggle open" aria-label="Collapse"></button><div class="node">Elevations (Building Elevation)</div>
                                    <ul>
                                        <li><div class="node">East</div></li>
                                        <li><div class="node">North</div></li>
                                        <li><div class="node">South</div></li>
                                        <li><div class="node">West</div></li>
                                    </ul>
                                </li>
                            </ul>
                        </li>
                        <li><div class="node"><svg class="ico" width="16" height="16"><path d="M1 1h14v14H1z" fill="#fff" stroke-width="1.5"/><path d="M1 2h14" stroke-width="3"/><path d="M3 6h3v3H3z" fill="#555"/><circle cx="4.5" cy="12" r="1.5" fill="#555"/><path d="M8 6h5M8 8h5M8 11h5M8 13h5"/></svg>Legends</div></li>
                        <li><div class="node"><svg class="ico" width="16" height="16"><path d="M1 3h14v11H1z" fill="#fff" stroke-width="1.5"/><path d="M1 4h14" stroke-width="2"/><path d="M1 8h14M1 11h14M6 5v9M4 5v9" stroke="#888"/></svg>Schedules/Quantities</div></li>
                        <li><div class="node"><svg class="ico" width="16" height="16"><path d="M1 3h10l4 3v8H1zM11 1v5h4" fill="#fff"/><path d="M3 6h7v6H7V9H3zM3 12h3" stroke-width="1.5" stroke="#68707a"/></svg>Sheets (all)</div></li>
                        <li><button class="toggle" aria-label="Expand"></button><div class="node"><svg class="ico" width="16" height="16"><path d="M1 2h7v7H1zM10 2h4v12H2v-3h8z" fill="#f4f4f4" stroke-width="1.5"/></svg>Families</div></li>
                        <li><button class="toggle" aria-label="Expand"></button><div class="node"><svg class="ico" width="16" height="16"><path d="M4 1H1v13h3M12 1h3v13h-3"/><circle cx="7" cy="7" r="3" fill="#ccd"/><path d="M6 5h6v6H8z" fill="#bcc"/></svg>Groups</div></li>
                        <li><div class="node"><svg width="16" height="16"><rect x="1" y="6" width="7" height="5" rx="2" fill="none" stroke="#b97d00" stroke-width="2"/><rect x="8" y="6" width="7" height="5" rx="2" fill="none" stroke="#dca000" stroke-width="2"/><path d="M5 8h6" stroke="#8a5a00"/></svg>Revit Links</div></li>
                    </ul>
                </div>
            </section>
        </aside>

        <section class="view">
            <div class="view-area">
                <div class="canvas">
                    <!-- floor sketch and its dimensions -->
                    <svg class="sketch" width="830" height="470">
                        <g class="boundary">
                            <path d="M590 99L784 210 395 435 201 323z"/>
                            <path d="M356 234l39 22-64 37 64 38-90 51"/>
                            <path d="M543 341l78-45M559 350l77-45"/>
                        </g>
                        <g class="dimension">
                            <path d="M606 77L821 201M596 94l33-19M791 207l32-18"/>
                            <path d="M820 219L409 456M792 216l28 16M402 440l29 17"/>
                            <path class="tick" d="M605 82h26M798 194h27M809 217v17M420 441v17"/>
                            <text transform="translate(722 133) rotate(30)">15' - 0"</text>
                            <text transform="translate(631 358) rotate(-30)">30' - 0"</text>
                        </g>
                    </svg>
                    <div class="mdi">
                        <button aria-label="Minimize view"><svg class="ico" width="14" height="14"><path d="M1 7h11v3H1z" fill="#fff"/></svg></button>
                        <button aria-label="Restore view"><svg class="ico" width="14" height="14"><path d="M4 1h8v9H4zM2 3h8v9H2z" fill="#fff"/><path d="M5 6h2v3H5z"/></svg></button>
                        <button aria-label="Close view"><svg class="ico" width="14" height="14"><path d="M2 2h3l2 3 2-3h3L9 7l3 5H9L7 9l-2 3H2l3-5z" fill="#fff"/></svg></button>
                    </div>
                    <svg class="viewcube" width="136" height="114">
                        <path d="M4 68a64 42 0 1 0 128 0a64 42 0 1 0-128 0zM18 64a50 34 0 1 0 100 0a50 34 0 1 0-100 0z" fill="#f0f0f0" fill-rule="evenodd" stroke="#bbb" stroke-dasharray="3 1"/>
                        <text class="compass" transform="translate(22 96) rotate(-60)">E</text>
                        <text class="compass" transform="translate(109 95) rotate(50)">N</text>
                        <text class="compass far" x="29" y="43">S</text>
                        <text class="compass far" x="109" y="43">W</text>
                        <ellipse cx="68" cy="66" rx="44" ry="24" fill="url(#shade)"/>
                        <path d="M68 4l35 16v2l-2 38-33 21-33-21-2-38v-2z" fill="url(#ring)" stroke="#888"/>
                        <path d="M68 4l35 16-35 21-35-21z" fill="#f4f4f4" stroke="#888"/>
                        <path d="M68 41v40" stroke="#777"/>
                        <text transform="translate(67 17) rotate(150)">TOP</text>
                        <text transform="translate(49 54) rotate(27)">RIGHT</text>
                        <text transform="translate(87 56) rotate(-27)">BACK</text>
                    </svg>
                    <div class="navbar">
                        <button class="round" aria-label="Close navigation bar"><svg width="9" height="9"><circle cx="4.5" cy="4.5" r="4" fill="#aaa"/><path d="M3 3l3 3M6 3L3 6" stroke="#fff"/></svg></button>
                        <button aria-label="Steering wheel"><svg class="ico" width="24" height="24"><path d="M12 1h8q2 0 2 2v9a10 10 0 1 1-10-11z" fill="#e6e8f0"/><circle cx="12" cy="12" r="6" fill="#fff"/><path d="M4 18l4-2M20 18l-4-2"/></svg></button>
                        <button aria-label="Steering wheel menu"><i class="tri"></i></button>
                        <hr>
                        <button aria-label="Zoom region"><svg class="ico" width="18" height="18"><path d="M1 1h12v12H1z" fill="#fff"/><circle cx="12" cy="12" r="3" fill="#eee"/><path d="M14 14l3 3" stroke-width="2"/></svg></button>
                        <button aria-label="Zoom menu"><i class="tri"></i></button>
                        <button class="round low" aria-label="Customize"><svg width="9" height="9"><circle cx="4.5" cy="4.5" r="4" fill="#aaa"/><path d="M2 4h5M3 6h3" stroke="#fff"/></svg></button>
                    </div>
                </div>
                <div class="vscroll view-vscroll">
                    <svg class="chev" width="10" height="8"><path d="M1 6l4-4 4 4"/></svg>
                    <i class="thumb-bar"></i>
                    <svg class="chev" width="10" height="8"><path d="M1 2l4 4 4-4"/></svg>
                </div>
            </div>
            <div class="view-controls">
                <button class="scale">1/8" = 1'-0"</button>
                <button aria-label="Detail level"><svg class="ico" width="16" height="16"><path d="M1 2h14v11H1z" fill="#fff" stroke-width="1.5"/><path d="M1 2h5v4H1zM10 2h5v4h-5zM6 6h4v3H6zM1 9h5v4H1zM10 9h5v4h-5z" fill="#68707a" stroke="none"/></svg></button>
                <button aria-label="Visual style"><svg class="ico" width="16" height="16"><path d="M1 7l5-4h9v5l-4 5H1zM1 7h10v6M11 7l4-4" fill="#fff"/></svg></button>
                <button aria-label="Sun path"><svg width="16" height="16"><circle cx="7" cy="7" r="4" fill="#ffdc60" stroke="#d29a10"/><path d="M7 0v2M1 2l2 1M13 1l-2 2M0 7h2M2 12l2-1" stroke="#d29a10"/><use href="#redx" x="8" y="7" width="8" height="8"/></svg></button>
                <button aria-label="Shadows"><svg width="16" height="16"><circle cx="7" cy="6" r="5" fill="#bfe0fb" stroke="#2a7fd0"/><path d="M3 13h6" stroke="#456" stroke-width="2"/><use href="#redx" x="8" y="7" width="8" height="8"/></svg></button>
                <button disabled aria-label="Rendering"><svg class="ico" width="16" height="16"><path d="M0 4h3l2-2h5l2 3M4 5v4l3 4h3M13 9v6"/><circle cx="13" cy="9" r="2"/></svg></button>
                <button aria-label="Crop view"><svg width="16" height="16" fill="none" stroke-width="2"><path d="M3 13V4h12" stroke="#333"/><path d="M6 13V7h9" stroke="#2a7fd0"/><path d="M0 12h3" stroke="#333"/><use href="#redx" x="8" y="6" width="8" height="8"/></svg></button>
                <button aria-label="Show crop region"><svg width="16" height="16" fill="none" stroke-width="2"><path d="M3 13V4h6" stroke="#2a7fd0"/><path d="M7 13V8h3" stroke="#c4161c"/><path d="M0 12h3" stroke="#333"/><use href="#bulb" x="8" y="2" width="8" height="12" stroke-width="1"/></svg></button>
                <button aria-label="Lock 3D view"><svg class="ico" width="16" height="16"><path d="M1 6l5-5 6 2 2 5v4l-5 1-7-1zM1 6l5 2V3M6 8l1 5" fill="#fff"/><path d="M9 9h6v5H9z" fill="#5fae8c"/><path d="M10 9V7h4v2"/></svg></button>
                <button aria-label="Temporary hide"><svg class="ico" width="16" height="16"><path d="M0 4l3-1 2 4M9 9l2-2M11 2q4 0 4 5"/><circle cx="6" cy="10" r="3" fill="#dfe6ea"/><circle cx="12" cy="8" r="3" fill="#dfe6ea"/></svg></button>
                <button aria-label="Reveal hidden"><svg width="8" height="14"><use href="#bulb" x="0" y="1" width="8" height="12"/></svg></button>
                <button disabled aria-label="Temporary properties"><svg class="ico" width="16" height="16"><path d="M1 4h12v3M1 4v9h5M3 2v2M7 2v2M11 2v2M8 8h7v6H8zM10 10h3v2h-3z"/></svg></button>
                <button aria-label="Analytical model"><svg class="ico" width="16" height="16"><path d="M1 6l4-4h8v7M1 6h8v8M9 6l4-4M3 6v8M6 6v8M1 9h8" /><path d="M1 9v6M6 9v6" stroke="#c4161c"/><use href="#bulb" x="8" y="3" width="8" height="12"/></svg></button>
                <button disabled aria-label="Displacement sets"><svg class="ico" width="16" height="16"><path d="M1 7h4v6H1zM5 5l3-3h6v8l-3 3H5zM5 5h6v8M11 5l3-3"/></svg></button>
                <button aria-label="Constraints"><svg class="ico" width="16" height="16"><path d="M1 0v16M15 0v8M1 3h14M4 1L1 3l3 2M12 1l3 2-3 2" stroke="#222"/><path d="M10 10h5v5h-5z" fill="#444"/><path d="M11 10V8h3v2M3 12h5" stroke-dasharray="2 1"/></svg></button>
                <div class="hscroll">
                    <svg class="chev" width="8" height="10"><path d="M6 1L2 5l4 4"/></svg>
                    <i class="thumb-bar"></i>
                    <svg class="chev" width="8" height="10"><path d="M2 1l4 4-4 4"/></svg>
                </div>
            </div>
        </section>
    </main>

    <footer class="status">
        <p>Click to select, TAB for alternates, CTRL adds, SHIFT unselects.</p>
        <button class="flat" disabled aria-label="Worksets"><svg class="ico" width="18" height="18"><path d="M1 7l3-2 3 2v10H1zM7 4l3-2 3 2v8H7zM11 8l3-2 3 2v9h-6z" fill="#888"/></svg></button>
        <label class="combo workset"><select aria-label="Active workset" disabled><option></option></select><svg width="10" height="6"><path d="M1 1l4 4 4-4"/></svg></label>
        <button class="requests"><svg class="ico dis" width="16" height="16"><path d="M7 1h8v4h-4L6 15H1l5-9z" fill="#bbb"/></svg>:0</button>
        <button class="flat" disabled aria-label="Design options"><svg width="16" height="16"><path d="M1 1h14v14H1z" fill="#555"/></svg></button>
        <button class="flat" disabled aria-label="Pick to edit"><svg class="ico" width="16" height="16"><path d="M5 1h10v14H5z" fill="#777"/><path d="M1 8h8M6 5l3 3-3 3" stroke-width="2"/></svg></button>
        <label class="combo model"><select aria-label="Design option" disabled><option>Main Model</option></select><svg width="10" height="6"><path d="M1 1l4 4 4-4"/></svg></label>
        <div class="selectors">
            <button class="flat" aria-label="Select links"><svg width="16" height="16"><rect x="1" y="2" width="7" height="4" rx="2" fill="none" stroke="#dca000" stroke-width="2"/><rect x="8" y="2" width="7" height="4" rx="2" fill="none" stroke="#dca000" stroke-width="2"/><use href="#cursor" x="5" y="4" width="9" height="12"/></svg></button>
            <button class="flat" aria-label="Select underlay"><svg width="16" height="16"><path d="M5 2h10l-4 4H1zM5 6h10l-4 4H1zM5 10h8" fill="#bfe0fb" stroke="#1b75bb"/><use href="#cursor" x="7" y="4" width="9" height="12"/></svg></button>
            <button class="flat" aria-label="Select pinned"><svg width="16" height="16"><path d="M3 1h9v2h-2v4h3v3H2V7h3V3H3zM7 10v5" fill="#ee8d3c" stroke="#a04810"/><use href="#cursor" x="7" y="4" width="9" height="12"/></svg></button>
            <button class="flat" aria-label="Select by face"><svg width="16" height="16"><path d="M2 4l8-3v10l-8 4z" fill="#9fd0f5" stroke="#1b75bb"/><use href="#cursor" x="6" y="4" width="9" height="12"/></svg></button>
            <button class="flat" aria-label="Drag on selection"><svg class="ico" width="16" height="16"><path d="M5 1v10M0 6h10M3 3l2-2 2 2M3 9l2 2 2-2" stroke="#222"/><use href="#redx" x="8" y="0" width="8" height="8"/><use href="#cursor" x="6" y="5" width="9" height="11"/></svg></button>
            <button class="requests filter-count"><svg class="ico" width="16" height="16"><path d="M1 1h14v2L9 9v6H7V9L1 3z" fill="#dfe6ea"/></svg>:0</button>
        </div>
    </footer>
</div>
</body>
</html>
```
FILE: styles.css
```css
* {
    box-sizing: border-box;
}
body {
    margin: 0;
    height: 100vh;
    overflow: hidden;
    background: linear-gradient(#fff 28px, #e4e4e4 60px, #e4e4e4);
    font-family: "Open Sans", "Noto Sans", sans-serif;
    font-size: 12px;
    color: #111;
}
button, input, select {
    font: inherit;
    color: inherit;
}
button {
    display: inline-flex;
    align-items: center;
    justify-content: center;
    padding: 0;
    border: 0;
    background: none;
}
h1, h2, p, ul {
    margin: 0;
    padding: 0;
    font-size: inherit;
    font-weight: normal;
}
a {
    color: inherit;
    text-decoration: none;
}
svg {
    display: block;
    flex: none;
}
.defs {
    position: absolute;
}
.ico {
    fill: none;
    stroke: #3a424e;
}
.dis, button:disabled svg {
    opacity: 0.45;
}
.tri {
    flex: none;
    border: 3px solid transparent;
    border-top-color: #444;
    border-bottom-width: 0;
}
.tri.up {
    border-width: 0 3px 3px;
    border-bottom-color: #777;
}
.bar {
    width: 8px;
    height: 2px;
    margin-bottom: 2px;
    background: #444;
}
.window {
    position: relative;
    display: flex;
    flex-direction: column;
    height: 100vh;
    margin-left: 3px;
    padding-bottom: 3px;
    border-left: 1px solid #777;
    background: #f0f0f0;
}

/* title bar */
.app-button {
    position: absolute;
    z-index: 2;
    top: 5px;
    left: 0;
    width: 41px;
    height: 41px;
    gap: 3px;
    border: 1px solid #000;
    background: linear-gradient(#d4d4d4, #8e8e8e);
}
.titlebar {
    display: flex;
    height: 29px;
    padding-top: 5px;
    background: #fff;
}
.qat, .infocenter {
    display: flex;
    align-items: center;
    height: 24px;
    border: 1px solid #8c8c8c;
    border-left: 0;
    background: linear-gradient(#e6e6e6, #c2c2c2);
}
.qat {
    padding-left: 46px;
}
.qat button, .infocenter button {
    width: 24px;
    height: 22px;
}
.qat .drop, .infocenter .drop {
    width: 12px;
}
.qat .more {
    flex-direction: column;
    width: 15px;
}
.sep {
    width: 1px;
    height: 18px;
    margin: 0 3px;
    background: #aaa;
}
.titlebar h1 {
    flex: 1;
    padding-left: 18px;
    text-align: center;
    line-height: 16px;
}
.infocenter {
    border-left: 1px solid #8c8c8c;
}
.infocenter .go {
    width: 14px;
}
.infocenter input {
    width: 180px;
    height: 22px;
    padding: 0 3px;
    border: 1px solid #000;
    background: #fff;
}
.infocenter input::placeholder {
    color: #777;
    font-style: italic;
    font-size: 11px;
}
.infocenter .user {
    width: 95px;
    gap: 4px;
    white-space: nowrap;
}
.infocenter .help {
    margin-left: 4px;
}
.help-mark {
    fill: #1d4fa8;
    font: bold 13px "Open Sans", sans-serif;
}
.win-controls {
    display: flex;
    margin: -5px 0 0 28px;
    height: 25px;
}
.win-controls button {
    width: 45px;
}
.win-controls button:last-child {
    width: 37px;
}

/* ribbon tabs */
.tabs {
    display: flex;
    height: 20px;
    padding-left: 47px;
    background: #a0a0a0;
}
.tabs a {
    padding: 0 9px 0 8px;
    line-height: 22px;
    color: #222;
    white-space: nowrap;
}
.tabs .active {
    height: 18px;
    margin: 3px 0 -1px;
    padding: 0 3px;
    border: 1px solid #00d47e;
    border-bottom: 0;
    background: linear-gradient(#dcf5ec, #b9e4d6);
    line-height: 16px;
}
.collapse {
    gap: 4px;
    margin-left: 23px;
}

/* ribbon */
.ribbon {
    display: flex;
    height: 95px;
    border: 1px solid #10b866;
    border-right: 0;
    background: linear-gradient(#c8e2d8, #8f8f8f);
}
.panel {
    display: flex;
    flex-direction: column;
    flex: none;
    border-right: 2px solid #b4bfbb;
    background: linear-gradient(#fff 60%, #f8f8f8);
}
.tools {
    display: flex;
    height: 74px;
    padding-top: 2px;
    color: #333;
}
.caption {
    display: flex;
    align-items: center;
    justify-content: center;
    gap: 6px;
    height: 18px;
    margin: 0 1px;
    background: #ececec;
    color: #333;
    white-space: nowrap;
}
.caption .tri {
    border-width: 4px 4px 0;
}
.context .caption {
    background: linear-gradient(#c0e2d6, #dcf8ef);
}
.p-select { width: 57px; }
.p-props { width: 64px; }
.p-clip { width: 80px; }
.p-geo { width: 139px; }
.p-modify { width: 238px; }
.p-view { width: 65px; }
.p-measure { width: 56px; }
.p-create { width: 82px; border-right: 0; }
.p-mode { width: 44px; margin-left: 3px; }
.p-draw { width: 239px; }
.p-plane { width: 160px; border-right: 0; }
.big {
    flex-direction: column;
    justify-content: flex-start;
    width: 39px;
    padding-top: 2px;
    line-height: 15px;
    white-space: nowrap;
}
.big svg {
    margin-bottom: 4px;
}
.p-select .big {
    width: 44px;
    height: 72px;
    margin-left: 6px;
}
.pressed {
    border: 1px solid #1c66b8;
    background: linear-gradient(#cfe4f8, #b3d6f5);
}
button:disabled {
    color: #a6a6a6;
}
button:disabled .tri {
    border-top-color: #999;
}
.stack {
    display: flex;
    flex-direction: column;
    align-items: center;
}
.stack button {
    height: 36px;
}
.stack .pressed {
    width: 38px;
}
.col {
    display: flex;
    flex-direction: column;
    width: 26px;
}
.col button, .col span {
    height: 24px;
}
.narrow {
    width: 10px;
}
.labelled {
    width: 70px;
}
.labelled button {
    justify-content: flex-start;
    gap: 5px;
    white-space: nowrap;
}
.p-clip .tools {
    padding-left: 6px;
    gap: 5px;
}
.p-clip .big {
    width: 42px;
}
.p-clip .big .tri {
    margin-top: 3px;
}
.p-geo .tools {
    padding-left: 6px;
}
.large-grid {
    display: grid;
    grid-template: 36px 36px / repeat(4, 39px);
}
.p-modify .tools {
    padding-left: 2px;
    gap: 2px;
}
.small-grid {
    display: grid;
    grid-template: repeat(3, 24px) / repeat(3, 25px);
}
.p-view .tools, .p-measure .tools {
    padding-left: 2px;
}
.p-measure .stack {
    width: 40px;
}
.p-measure .narrow {
    width: 10px;
}
.p-create .large-grid {
    grid-template-columns: 39px 37px;
    padding-left: 2px;
}
.p-draw .tools {
    padding-left: 6px;
}
.p-draw .labelled {
    width: 104px;
}
.gallery {
    display: flex;
    height: 68px;
    margin-top: 2px;
    border: 1px solid #bbb;
    background: #f8f8f8;
}
.shapes {
    display: grid;
    grid-template: repeat(3, 22px) / repeat(5, 22px);
}
.gallery-scroll {
    display: flex;
    flex-direction: column;
    width: 14px;
    border-left: 1px solid #ccc;
}
.gallery-scroll button {
    flex: 1;
    flex-direction: column;
    border-bottom: 1px solid #ccc;
    background: #eee;
}
.options-bar {
    height: 28px;
    padding-left: 9px;
    background: #d0e1da;
    line-height: 30px;
}

/* docked palettes */
.workspace {
    display: flex;
    flex: 1;
    min-height: 0;
}
.docks {
    display: flex;
    flex-direction: column;
    width: 327px;
}
.palette header {
    display: flex;
    align-items: center;
    justify-content: space-between;
    height: 18px;
    padding: 0 6px 0 4px;
    background: #bfcddb;
    white-space: nowrap;
}
.palette-body {
    margin: 2px 1px 0 1px;
    border: solid #777;
    border-width: 1px 0 0 1px;
}
.type-selector {
    justify-content: flex-start;
    width: 100%;
    height: 73px;
    padding: 0 2px;
    border: 1px solid #ccc;
    background: linear-gradient(#fdfdfd, #ececec);
    text-align: left;
    line-height: 16px;
    color: #444;
}
.type-selector .thumb {
    display: flex;
    align-items: center;
    width: 66px;
    height: 66px;
    border: 1px solid #ccc;
    background: #fff;
}
.thumb i {
    width: 64px;
    height: 22px;
    border: 1px solid #444;
    background: #c2c2c2;
}
.type-name {
    flex: 1;
    padding-left: 4px;
}
.type-selector .tri {
    border-width: 4px 4px 0;
}
.filter-row {
    display: flex;
    align-items: flex-start;
    height: 24px;
}
.combo {
    position: relative;
    display: block;
}
.combo select {
    display: block;
    width: 100%;
    height: 100%;
    padding: 0 3px;
    appearance: none;
    border: 1px solid #aaa;
    border-radius: 0;
    background: #e1e1e1;
    opacity: 1;
}
.combo svg {
    position: absolute;
    right: 4px;
    top: 50%;
    margin-top: -2px;
    fill: none;
    stroke: #555;
}
.filter {
    width: 241px;
    height: 23px;
}
.edit-type {
    gap: 5px;
    height: 20px;
    margin-left: 6px;
    white-space: nowrap;
}
.grid-scroll {
    display: flex;
    height: 267px;
}
.grid-clip {
    flex: 1;
    overflow: hidden;
}
table {
    width: 306px;
    table-layout: fixed;
    border-collapse: separate;
    border-spacing: 0;
    background: #fff;
}
tr {
    height: 18px;
}
th, td {
    height: 18px;
    padding: 0 0 0 2px;
    border-bottom: 1px dotted #777;
    border-right: 1px dotted #777;
    font-weight: normal;
    text-align: left;
    vertical-align: top;
    line-height: 16px;
    white-space: nowrap;
}
th[scope=row] {
    width: 153px;
    padding-left: 8px;
}
.group th {
    position: relative;
    border-color: #dcdcdc;
    background: #dcdcdc;
}
.group svg {
    position: absolute;
    right: 5px;
    top: 4px;
    fill: none;
    stroke: #000;
}
.ro {
    color: #777;
}
td.editing {
    padding: 0;
}
.editing input {
    display: block;
    width: 100%;
    height: 17px;
    padding: 0 2px;
    border: 1px solid #000;
    background: #fff;
}
input[type=checkbox] {
    display: block;
    position: relative;
    width: 13px;
    height: 13px;
    margin: 3px 0 0 1px;
    appearance: none;
    border: 1px solid #333;
    background: #fff;
}
input[type=checkbox]:checked::after {
    content: "";
    position: absolute;
    left: 3px;
    top: 0;
    width: 4px;
    height: 8px;
    border: solid #333;
    border-width: 0 1px 1px 0;
    transform: rotate(45deg);
}
input[type=checkbox]:disabled {
    border-color: #ccc;
}
.vscroll {
    display: flex;
    flex-direction: column;
    align-items: center;
    justify-content: space-between;
    width: 17px;
    padding: 5px 0;
}
.chev {
    fill: none;
    stroke: #505050;
    stroke-width: 2;
}
.thumb-bar {
    background: #cdcdcd;
}
.grid-scroll .thumb-bar {
    width: 15px;
    height: 128px;
    margin: 4px 0 auto;
}
.palette-foot {
    display: flex;
    align-items: flex-start;
    justify-content: space-between;
    height: 25px;
    padding: 1px 3px 0 2px;
}
.palette-foot a {
    color: #0066cc;
    line-height: 18px;
    text-decoration: underline;
}
.palette-foot button {
    width: 73px;
    height: 21px;
    border: 1px solid #bfbfbf;
    background: #ccc;
    color: #888;
}
.browser {
    display: flex;
    flex: 1;
    flex-direction: column;
    margin-top: 6px;
}
.tree-box {
    flex: 1;
    margin-bottom: 1px;
    background: #fff;
}

/* project tree */
.tree, .tree ul {
    list-style: none;
}
.tree ul {
    padding-left: 20px;
}
.tree li {
    position: relative;
}
.tree li::before {
    content: "";
    position: absolute;
    top: 0;
    bottom: 0;
    left: 8px;
    border-left: 1px dotted #999;
}
.tree > li:first-child::before {
    top: 9px;
}
.tree li:last-child::before {
    bottom: auto;
    height: 10px;
}
.tree li::after {
    content: "";
    position: absolute;
    top: 10px;
    left: 9px;
    width: 14px;
    border-top: 1px dotted #999;
}
.tree > li::after {
    width: 11px;
}
.node {
    display: flex;
    align-items: center;
    height: 18px;
    padding-left: 26px;
    white-space: nowrap;
}
.tree > li > .node {
    gap: 5px;
    padding-left: 21px;
}
.selected {
    margin-left: -3px;
    padding: 0 3px;
    background: #e0e0e0;
    line-height: 18px;
}
.toggle {
    position: absolute;
    z-index: 1;
    top: 6px;
    left: 4px;
    width: 9px;
    height: 9px;
    border: 1px solid #999;
    background: linear-gradient(#3a55a0, #3a55a0) center / 5px 1px no-repeat, linear-gradient(#3a55a0, #3a55a0) center / 1px 5px no-repeat, #fff;
}
.toggle.open {
    background: linear-gradient(#3a55a0, #3a55a0) center / 5px 1px no-repeat, #fff;
}

/* drawing view */
.view {
    display: flex;
    flex: 1;
    flex-direction: column;
    min-width: 0;
    margin-left: 4px;
    border: solid #777;
    border-width: 1px 0 0 2px;
}
.view-area {
    display: flex;
    flex: 1;
    min-height: 0;
}
.canvas {
    position: relative;
    flex: 1;
    overflow: hidden;
    background: #fff;
}
.sketch {
    position: absolute;
    left: 0;
    top: 0;
}
.boundary {
    fill: none;
    stroke: #f000f0;
    shape-rendering: crispEdges;
}
.dimension {
    fill: none;
    stroke: #000;
}
.dimension .tick {
    stroke-width: 2;
}
.dimension text {
    fill: #000;
    stroke: none;
    text-anchor: middle;
    font: 18px "Liberation Sans", sans-serif;
}
.mdi {
    position: absolute;
    top: 7px;
    right: 4px;
    display: flex;
    gap: 4px;
}
.viewcube {
    position: absolute;
    top: 77px;
    right: 23px;
}
.viewcube text {
    fill: #999;
    text-anchor: middle;
    font: bold 9px "Liberation Sans", sans-serif;
}
.viewcube .compass {
    fill: #ddd;
    stroke: #aaa;
    font-size: 18px;
}
.viewcube .far {
    font-size: 12px;
}
.navbar {
    position: absolute;
    top: 199px;
    right: 1px;
    display: flex;
    flex-direction: column;
    align-items: center;
    width: 36px;
    height: 118px;
    border: 2px solid #bbb;
    border-radius: 5px;
    background: #f4f4f4;
    opacity: 0.7;
}
.navbar .round {
    align-self: flex-end;
    margin: 1px 3px 8px;
}
.navbar .low {
    margin: auto 3px 1px;
}
.navbar .tri {
    margin: 7px 0 4px;
}
.navbar hr {
    width: 26px;
    margin: 0 0 8px;
    border: 0;
    border-top: 1px solid #aaa;
}
.view-vscroll {
    width: 9px;
    overflow: hidden;
    background: #f0f0f0;
}
.view-vscroll .thumb-bar {
    width: 9px;
    height: 18px;
}
.view-controls {
    display: flex;
    align-items: center;
    height: 19px;
    padding: 0 0 2px 11px;
}
.view-controls button {
    width: 21px;
    height: 17px;
}
.view-controls .scale {
    width: 65px;
    justify-content: flex-start;
    white-space: nowrap;
}
.hscroll {
    display: flex;
    flex: 1;
    align-items: center;
    justify-content: space-between;
    padding: 0 14px 0 5px;
}
.hscroll .thumb-bar {
    width: 17px;
    height: 15px;
}

/* status bar */
.status {
    display: flex;
    align-items: center;
    height: 26px;
    border: solid #888;
    border-width: 1px 0;
    background: linear-gradient(#e8e8e8, #c2c2c2);
}
.status p {
    flex: 0 0 610px;
    padding-left: 2px;
}
.status .combo {
    height: 22px;
    margin: 0 3px 0 2px;
}
.status .combo select {
    border-color: #ddd;
    background: #fff;
    color: #888;
}
.status .combo svg {
    stroke: #aaa;
}
.workset {
    width: 208px;
}
.model {
    width: 156px;
}
.flat {
    width: 23px;
    height: 22px;
    margin-right: 2px;
    background: #d6d6d6;
}
.requests {
    justify-content: flex-start;
    gap: 4px;
    width: 53px;
    padding-left: 3px;
}
.selectors {
    display: flex;
    align-items: center;
    margin-left: auto;
    padding-right: 73px;
}
.selectors .flat {
    width: 24px;
}
.filter-count {
    gap: 0;
    width: 30px;
    padding: 0;
}
```
